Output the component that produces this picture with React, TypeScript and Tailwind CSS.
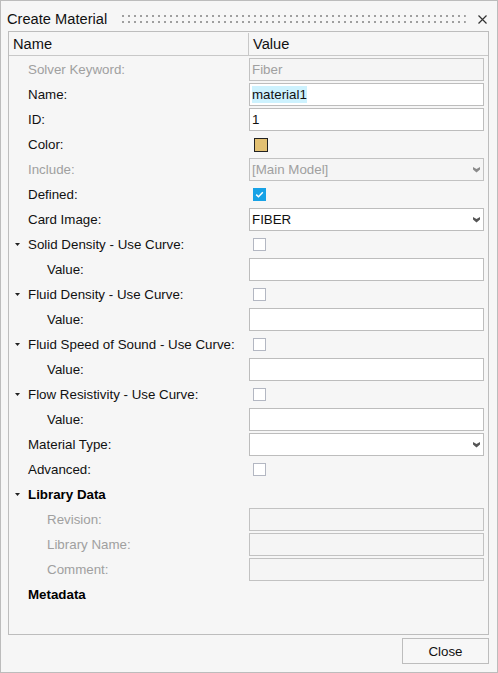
import React from "react";
import clsx from "clsx";

const font = { fontFamily: '"Liberation Sans", Arial, sans-serif' };

type Kind = "text" | "select" | "check" | "checked" | "color" | "none";

type Row = {
  label: string;
  kind: Kind;
  value?: string;
  caret?: boolean;
  indent?: boolean;
  disabled?: boolean;
  bold?: boolean;
  selected?: boolean;
};

const rows: Row[] = [
  { label: "Solver Keyword:", kind: "text", value: "Fiber", disabled: true },
  { label: "Name:", kind: "text", value: "material1", selected: true },
  { label: "ID:", kind: "text", value: "1" },
  { label: "Color:", kind: "color" },
  { label: "Include:", kind: "select", value: "[Main Model]", disabled: true },
  { label: "Defined:", kind: "checked" },
  { label: "Card Image:", kind: "select", value: "FIBER" },
  { label: "Solid Density - Use Curve:", kind: "check", caret: true },
  { label: "Value:", kind: "text", indent: true },
  { label: "Fluid Density - Use Curve:", kind: "check", caret: true },
  { label: "Value:", kind: "text", indent: true },
  { label: "Fluid Speed of Sound - Use Curve:", kind: "check", caret: true },
  { label: "Value:", kind: "text", indent: true },
  { label: "Flow Resistivity - Use Curve:", kind: "check", caret: true },
  { label: "Value:", kind: "text", indent: true },
  { label: "Material Type:", kind: "select" },
  { label: "Advanced:", kind: "check" },
  { label: "Library Data", kind: "none", caret: true, bold: true },
  { label: "Revision:", kind: "text", indent: true, disabled: true },
  { label: "Library Name:", kind: "text", indent: true, disabled: true },
  { label: "Comment:", kind: "text", indent: true, disabled: true },
  { label: "Metadata", kind: "none", bold: true },
];

function Caret() {
  return (
    <svg width="5" height="3" viewBox="0 0 5 3">
      <polygon points="0,0 5,0 2.5,3" fill="#222" />
    </svg>
  );
}

function Arrow({ disabled }: { disabled?: boolean }) {
  return (
    <svg width="7" height="6" viewBox="0 0 7 6">
      <polygon points="0,0 3.5,2 7,0 7,2.6 3.5,5.6 0,2.6" fill={disabled ? "#8a8a8a" : "#555"} />
    </svg>
  );
}

function Value({ row }: { row: Row }) {
  if (row.kind === "none") return null;
  if (row.kind === "color")
    return <div className="ml-[5px] h-[14px] w-[14px] border border-[#222] bg-[#e2c072]" />;
  if (row.kind === "check")
    return <div className="ml-[4px] h-[13px] w-[13px] border border-[#b3b7c2] bg-white" />;
  if (row.kind === "checked")
    return (
      <div className="ml-[4px] flex h-[13px] w-[13px] items-center justify-center bg-[#17a2e6]">
        <svg width="9" height="7" viewBox="0 0 9 7">
          <path d="M1.2 3.6 L3.5 5.7 L7.8 1.3" fill="none" stroke="#fff" strokeWidth="1.5" />
        </svg>
      </div>
    );
  return (
    <div
      className={clsx(
        "flex h-[23px] w-full items-center justify-between border pl-[2px] pr-[3px] text-[13.33px]",
        row.disabled ? "border-[#c2c2c2] bg-[#f5f5f5] text-[#a0a0a0]" : "border-[#bdbdbd] bg-white text-[#111]"
      )}
    >
      <span className={clsx("pt-[1px] leading-[16px]", row.selected && "bg-[#cdf2fe]")}>{row.value}</span>
      {row.kind === "select" && <Arrow disabled={row.disabled} />}
    </div>
  );
}

export default function App() {
  return (
    <div style={font} className="flex h-[673px] w-[498px] flex-col border border-[#bcbcbc] bg-[#f6f6f6]">
      <div className="flex h-[30px] shrink-0 items-center pt-[6px] pl-[6px] pr-[10px]">
        <span className="text-[14.67px] leading-none text-[#111]">Create Material</span>
        <svg className="ml-[15px] mr-[12px] h-[8px] flex-1">
          <defs>
            <pattern id="grip" width="6" height="6" patternUnits="userSpaceOnUse">
              <rect x="0" y="0" width="2" height="2" fill="#9f9f9f" />
            </pattern>
          </defs>
          <rect x="0" y="0" width="100%" height="8" fill="url(#grip)" />
        </svg>
        <svg width="9" height="9" viewBox="0 0 9 9">
          <path d="M0.5 0.5 L8.5 8.5 M8.5 0.5 L0.5 8.5" stroke="#333" strokeWidth="1.2" />
        </svg>
      </div>

      <div className="ml-[7px] mr-[8px] flex h-[604px] shrink-0 flex-col border border-[#bdbdbd]">
        <div className="flex h-[24px] shrink-0 border-b border-[#c8c8c8] pt-[1px] text-[14.67px] text-[#111]">
          <div className="flex w-[239px] items-center pl-[4px]">Name</div>
          <div className="flex items-center border-l border-[#c8c8c8] pl-[4px]">Value</div>
        </div>
        <div className="pt-[1px]">
          {rows.map((row, i) => (
            <div key={i} className="flex h-[25px] items-center">
              <div
                className={clsx(
                  "flex w-[240px] items-center pt-[1px] text-[13.33px]",
                  row.indent ? "pl-[38px]" : row.caret ? "pl-[6px]" : "pl-[19px]",
                  row.disabled ? "text-[#a0a0a0]" : "text-[#111]",
                  row.bold && "font-bold text-black"
                )}
              >
                {row.caret && !row.indent && (
                  <span className="flex w-[13px] items-center">
                    <Caret />
                  </span>
                )}
                <span>{row.label}</span>
              </div>
              <div className="flex w-[235px] items-center">
                <Value row={row} />
              </div>
            </div>
          ))}
        </div>
      </div>

      <div className="flex flex-1 items-start justify-end pt-[3px] pr-[8px]">
        <button className="h-[26px] w-[87px] border border-[#bdbdbd] bg-[#f7f7f7] pt-[1px] text-[13.33px] text-[#111]">
          Close
        </button>
      </div>
    </div>
  );
}
